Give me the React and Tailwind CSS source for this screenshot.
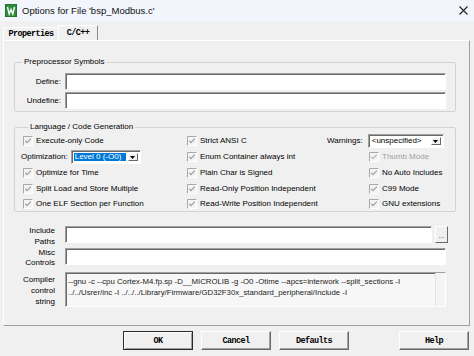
import React from "react";

const Check = ({ dim }) => (
  <svg width="10" height="10" viewBox="0 0 10 10" className="shrink-0">
    <rect x="0" y="0" width="10" height="10" fill="#f4f4f4" />
    <path d="M0.5 10 V0.5 H10" stroke="#a8a8a8" fill="none" />
    <path d="M0.5 9.5 H9.5 V0.5" stroke="#ffffff" fill="none" />
    <path d="M2.3 4.8 L4 6.6 L7.8 2.6" stroke={dim ? "#b8b8b8" : "#a0a0a0"} strokeWidth="1.3" fill="none" />
  </svg>
);

const CB = ({ label, dim, cls }) => (
  <div className={"h-[16px] flex items-center " + (cls || "")}>
    <Check dim={dim} />
    <span className={dim ? "text-[#a0a0a0] ml-[3px]" : "ml-[3px]"}>{label}</span>
  </div>
);

const Arrow = () => (
  <div className="w-[10px] h-full bg-[#f0f0f0] border border-t-white border-l-white border-b-[#696969] border-r-[#696969] flex items-center justify-center shrink-0">
    <svg width="5" height="3" viewBox="0 0 5 3">
      <path d="M0 0 H5 L2.5 3 Z" fill="#000" />
    </svg>
  </div>
);

const sunken =
  "bg-white border border-t-[#a0a0a0] border-l-[#a0a0a0] border-b-white border-r-white shadow-[inset_1px_1px_0_#696969]";

export default function App() {
  return (
    <div className="w-[474px] h-[356px] bg-[#f0f0f0] overflow-hidden flex flex-col font-['Liberation_Sans',Arial,sans-serif] text-[8px] leading-[10px] text-black">
      {/* Title bar */}
      <div className="h-[21px] shrink-0 bg-[#f2f5fb] flex items-center pl-[5px] pr-[6px]">
        <svg width="12" height="13" viewBox="0 0 12 13" className="shrink-0">
          <rect x="0" y="0" width="12" height="13" fill="#2f8a3c" />
          <rect x="0" y="0" width="12" height="13" fill="none" stroke="#1d5e27" />
          <path d="M2.5 3 L4.2 10 L6 5.5 L7.8 10 L9.5 3" stroke="#ffffff" strokeWidth="1.4" fill="none" />
        </svg>
        <span className="ml-[5px] text-[9.5px] leading-[12px] text-[#111]">Options for File 'bsp_Modbus.c'</span>
        <svg width="9" height="9" viewBox="0 0 9 9" className="ml-auto">
          <path d="M0.5 0.5 L8.5 8.5 M8.5 0.5 L0.5 8.5" stroke="#222" strokeWidth="1.1" />
        </svg>
      </div>

      {/* Tabs */}
      <div className="h-[19px] shrink-0 flex items-end pl-[3px] font-['Liberation_Mono',monospace] font-bold text-[8.5px] tracking-[-0.6px]">
        <div className="w-[55px] h-[13px] flex items-center justify-center border-t border-l border-t-white border-l-white">
          Properties
        </div>
        <div className="w-[40px] h-[15px] flex items-center justify-center border-t border-l border-r border-t-white border-l-white border-r-[#8a8a8a] pb-[1px]">
          C/C++
        </div>
      </div>

      {/* Panel */}
      <div className="ml-[3px] w-[467px] h-[286px] shrink-0 border border-t-white border-l-white border-b-[#a0a0a0] border-r-[#a0a0a0] flex flex-col">
        {/* Preprocessor Symbols */}
        <fieldset className="mt-[16px] ml-[10px] mr-[13px] border border-[#d3d3d3] rounded-[2px] pt-[6px] pb-[2px] pr-[9px] flex flex-col gap-[2px]">
          <legend className="ml-[7px] px-[2px] leading-[10px]">Preprocessor Symbols</legend>
          <div className="flex items-center">
            <span className="w-[46px] text-right">Define:</span>
            <div className={"ml-[4px] flex-1 h-[17px] " + sunken}></div>
          </div>
          <div className="flex items-center">
            <span className="w-[46px] text-right">Undefine:</span>
            <div className={"ml-[4px] flex-1 h-[17px] " + sunken}></div>
          </div>
        </fieldset>

        {/* Language / Code Generation */}
        <fieldset className="mt-[10px] ml-[10px] mr-[13px] border border-[#d3d3d3] rounded-[2px] pt-[1px] pl-[6px] flex">
          <legend className="ml-[7px] px-[2px] leading-[10px]">Language / Code Generation</legend>
          <div className="w-[165px] flex flex-col">
            <CB label="Execute-only Code" cls="ml-[2px]" />
            <div className="h-[16px] flex items-center">
              <span>Optimization:</span>
              <div className={"ml-[3px] w-[70px] h-[14px] flex items-stretch p-[2px] " + sunken}>
                <div className="flex-1 bg-[#0078d7] text-white flex items-center pl-[1px] mr-[2px]">Level 0 (-O0)</div>
                <Arrow />
              </div>
            </div>
            <CB label="Optimize for Time" cls="ml-[2px]" />
            <CB label="Split Load and Store Multiple" cls="ml-[2px]" />
            <div className="h-[14px] flex items-center ml-[2px]">
              <Check />
              <span className="ml-[3px]">One ELF Section per Function</span>
            </div>
          </div>
          <div className="w-[141px] flex flex-col">
            <CB label="Strict ANSI C" cls="ml-[1px]" />
            <CB label="Enum Container always int" cls="ml-[1px]" />
            <CB label="Plain Char is Signed" cls="ml-[1px]" />
            <CB label="Read-Only Position Independent" cls="ml-[1px]" />
            <div className="h-[14px] flex items-center ml-[1px]">
              <Check />
              <span className="ml-[3px]">Read-Write Position Independent</span>
            </div>
          </div>
          <div className="flex-1 flex flex-col">
            <div className="h-[16px] flex items-center">
              <span>Warnings:</span>
              <div className={"ml-[5px] w-[76px] h-[14px] flex items-stretch p-[2px] " + sunken}>
                <div className="flex-1 flex items-center pl-[1px]">&lt;unspecified&gt;</div>
                <Arrow />
              </div>
            </div>
            <CB label="Thumb Mode" dim cls="ml-[42px]" />
            <CB label="No Auto Includes" cls="ml-[42px]" />
            <CB label="C99 Mode" cls="ml-[42px]" />
            <div className="h-[14px] flex items-center ml-[42px]">
              <Check />
              <span className="ml-[3px]">GNU extensions</span>
            </div>
          </div>
        </fieldset>

        {/* Include / Misc / Compiler */}
        <div className="mt-[13px] flex items-start">
          <div className="w-[51px] text-right leading-[11px]">
            Include
            <br />
            Paths
          </div>
          <div className={"ml-[10px] w-[367px] h-[17px] mt-[1px] " + sunken}></div>
          <div className="ml-[3px] mt-[1px] w-[13px] h-[17px] bg-[#f0f0f0] border border-t-white border-l-white border-b-[#696969] border-r-[#696969] flex items-end justify-center pb-[3px] text-[7px] leading-[7px] text-[#555]">
            ...
          </div>
        </div>
        <div className="mt-[1px] flex items-start">
          <div className="w-[51px] text-right leading-[10px]">
            Misc
            <br />
            Controls
          </div>
          <div className={"ml-[10px] w-[381px] h-[17px] " + sunken}></div>
        </div>
        <div className="mt-[4px] flex items-start">
          <div className="w-[51px] text-right leading-[11px] mt-[2px]">
            Compiler
            <br />
            control
            <br />
            string
          </div>
          <div className={"ml-[10px] w-[381px] h-[35px] flex !bg-[#f7f7f7] " + sunken}>
            <div className="flex-1 pl-[2px] pt-[3px] leading-[11px] text-[7.8px] text-[#222] whitespace-nowrap overflow-hidden">
              --gnu -c --cpu Cortex-M4.fp.sp -D__MICROLIB -g -O0 -Otime --apcs=interwork --split_sections -I
              <br />
              ../../Usrer/inc -I ../../../Library/Firmware/GD32F30x_standard_peripheral/Include -I
            </div>
            <div className="w-[10px] border-l border-l-[#e4e4e4] bg-[#f4f4f4]"></div>
          </div>
        </div>
      </div>

      {/* Buttons */}
      <div className="mt-[5px] flex font-['Liberation_Mono',monospace] font-bold text-[8.5px] tracking-[-0.6px]">
        <div className="ml-[123px] w-[70px] h-[19px] border border-[#2a2a2a] bg-[#f0f0f0] shadow-[inset_1px_1px_0_#fff,inset_-1px_-1px_0_#a0a0a0] flex items-center justify-center">
          OK
        </div>
        <div className="ml-[8px] w-[70px] h-[19px] border border-t-white border-l-white border-b-[#696969] border-r-[#696969] bg-[#f0f0f0] shadow-[inset_-1px_-1px_0_#a0a0a0] flex items-center justify-center">
          Cancel
        </div>
        <div className="ml-[8px] w-[70px] h-[19px] border border-t-white border-l-white border-b-[#696969] border-r-[#696969] bg-[#f0f0f0] shadow-[inset_-1px_-1px_0_#a0a0a0] flex items-center justify-center">
          Defaults
        </div>
        <div className="ml-[50px] w-[70px] h-[19px] border border-t-white border-l-white border-b-[#696969] border-r-[#696969] bg-[#f0f0f0] shadow-[inset_-1px_-1px_0_#a0a0a0] flex items-center justify-center">
          Help
        </div>
      </div>
    </div>
  );
}
